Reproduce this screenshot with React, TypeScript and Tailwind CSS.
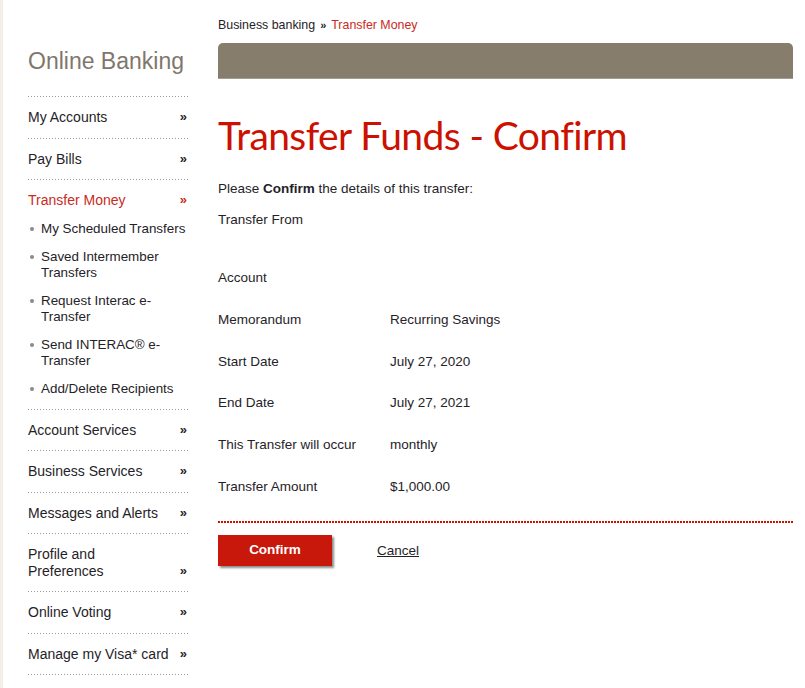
import React from "react";

const dotted = "h-px w-full bg-[linear-gradient(to_right,#9c9c9c_1px,transparent_1px)] bg-[length:3px_1px] bg-repeat-x";

function NavRow({ label, red, twoLine }: { label: React.ReactNode; red?: boolean; twoLine?: boolean }) {
  return (
    <div className={`flex justify-between items-end py-3 leading-[16.5px] text-[14px] ${red ? "text-[#cc2a1c]" : "text-[#1f2328]"}`}>
      <span className={twoLine ? "w-[100px]" : ""}>{label}</span>
      <span className="text-[13px] font-bold pr-[1px]">»</span>
    </div>
  );
}

function Sub({ children }: { children: React.ReactNode }) {
  return (
    <div className="flex items-start text-[13.4px] leading-[16px] text-[#1f2328]">
      <span className="w-[4px] h-[4px] mt-[6px] ml-[2px] mr-[7px] rounded-full bg-[#8a8a8a] shrink-0" />
      <span>{children}</span>
    </div>
  );
}

function DetailRow({ label, value, className = "" }: { label: string; value?: string; className?: string }) {
  return (
    <div className={`flex leading-[16px] ${className}`}>
      <span className="w-[172px]">{label}</span>
      <span>{value}</span>
    </div>
  );
}

export default function App() {
  return (
    <div className="w-[805px] h-[688px] flex bg-white overflow-hidden font-['Liberation_Sans',Arial,sans-serif]">
      <div className="w-[3px] h-full bg-[#f4eee7] shrink-0" />
      <aside className="ml-[25px] w-[160px] shrink-0 pt-[48px]">
        <div className="text-[23px] leading-[26px] text-[#7f776b] mb-[22px]">Online Banking</div>
        <div className={dotted} />
        <NavRow label="My Accounts" />
        <div className={dotted} />
        <NavRow label="Pay Bills" />
        <div className={dotted} />
        <div className="flex flex-col gap-3 pb-3">
          <div className="flex justify-between items-end pt-3 leading-[16.5px] text-[14px] text-[#cc2a1c]">
            <span>Transfer Money</span>
            <span className="text-[13px] font-bold pr-[1px]">»</span>
          </div>
          <Sub>My Scheduled Transfers</Sub>
          <Sub>Saved Intermember Transfers</Sub>
          <Sub>Request Interac e-Transfer</Sub>
          <Sub>Send INTERAC® e-Transfer</Sub>
          <Sub>Add/Delete Recipients</Sub>
        </div>
        <div className={dotted} />
        <NavRow label="Account Services" />
        <div className={dotted} />
        <NavRow label="Business Services" />
        <div className={dotted} />
        <NavRow label="Messages and Alerts" />
        <div className={dotted} />
        <NavRow label="Profile and Preferences" twoLine />
        <div className={dotted} />
        <NavRow label="Online Voting" />
        <div className={dotted} />
        <NavRow label="Manage my Visa* card" />
        <div className={dotted} />
      </aside>
      <main className="ml-[30px] w-[575px] shrink-0 pt-[18px] text-[13.5px] text-[#1f2328]">
        <div className="text-[12.4px] leading-[14px]">
          <span>Business banking</span>
          <span className="mx-[5px] text-[11px] font-bold">»</span>
          <span className="text-[#cc2a1c]">Transfer Money</span>
        </div>
        <div className="mt-[11px] h-[36px] rounded-t-[5px] bg-[#867d6c] border-b border-[#a39c90]" />
        <h1 className="mt-[32px] font-['Lato',sans-serif] text-[39px] tracking-[-0.6px] leading-[48px] text-[#cc1100]">Transfer Funds - Confirm</h1>
        <p className="mt-[22px] leading-[16px]">Please <b>Confirm</b> the details of this transfer:</p>
        <DetailRow className="mt-[15px]" label="Transfer From" />
        <DetailRow className="mt-[42px]" label="Account" />
        <DetailRow className="mt-[26px]" label="Memorandum" value="Recurring Savings" />
        <DetailRow className="mt-[25.5px]" label="Start Date" value="July 27, 2020" />
        <DetailRow className="mt-[25.5px]" label="End Date" value="July 27, 2021" />
        <DetailRow className="mt-[26px]" label="This Transfer will occur" value="monthly" />
        <DetailRow className="mt-[25.5px]" label="Transfer Amount" value="$1,000.00" />
        <div className="mt-[26px] h-[2px] w-full bg-[linear-gradient(to_right,#cc1100_2px,transparent_2px)] bg-[length:3px_2px] bg-repeat-x" />
        <div className="mt-[12px] flex items-start">
          <button className="w-[114px] h-[31px] bg-[#c8170b] text-white font-bold text-[13.5px] shadow-[2px_2px_2px_rgba(0,0,0,0.45)]">Confirm</button>
          <a className="ml-[45px] mt-[6px] underline text-[#1f2328]" href="#">Cancel</a>
        </div>
      </main>
    </div>
  );
}
